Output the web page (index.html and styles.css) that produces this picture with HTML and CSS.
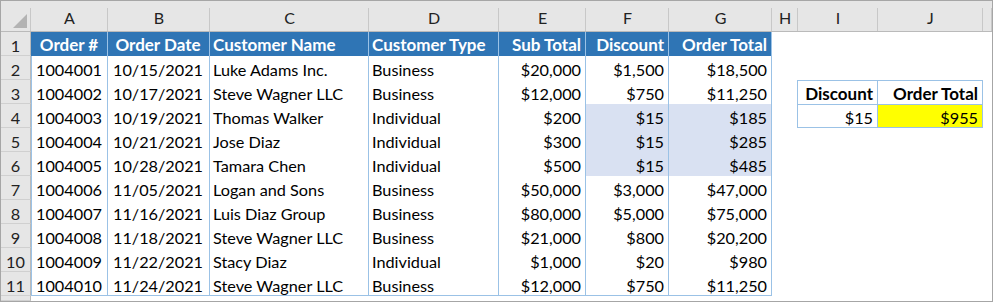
FILE: index.html
```
<!DOCTYPE html>
<html>
<head>
<meta charset="utf-8">
<link rel="stylesheet" href="styles.css">
</head>
<body>
<div class="sheet">
  <div class="ch corner"><svg width="29" height="30" viewBox="0 0 29 30"><polygon points="25,13 25,27 11,27" fill="#b3b3b3"/></svg></div>
  <div class="ch">A</div><div class="ch">B</div><div class="ch">C</div><div class="ch">D</div><div class="ch">E</div><div class="ch">F</div><div class="ch">G</div><div class="ch">H</div><div class="ch">I</div><div class="ch">J</div><div class="ch"></div>

  <div class="rh">1</div>
  <div class="c th cen first">Order #</div><div class="c th cen">Order Date</div><div class="c th">Customer Name</div><div class="c th">Customer Type</div><div class="c th r">Sub Total</div><div class="c th r">Discount</div><div class="c th r">Order Total</div>
  <div class="c"></div><div class="c"></div><div class="c"></div><div class="c"></div>

  <div class="rh">2</div>
  <div class="c t cen first">1004001</div><div class="c t cen">10/15/2021</div><div class="c t">Luke Adams Inc.</div><div class="c t">Business</div><div class="c t r">$20,000</div><div class="c t r">$1,500</div><div class="c t r">$18,500</div>
  <div class="c"></div><div class="c"></div><div class="c"></div><div class="c"></div>

  <div class="rh">3</div>
  <div class="c t cen first">1004002</div><div class="c t cen">10/17/2021</div><div class="c t">Steve Wagner LLC</div><div class="c t">Business</div><div class="c t r">$12,000</div><div class="c t r">$750</div><div class="c t r">$11,250</div>
  <div class="c sl"></div><div class="c st sh r">Discount</div><div class="c st sh r">Order Total</div><div class="c"></div>

  <div class="rh">4</div>
  <div class="c t cen first">1004003</div><div class="c t cen">10/19/2021</div><div class="c t">Thomas Walker</div><div class="c t">Individual</div><div class="c t r">$200</div><div class="c t r hl">$15</div><div class="c t r hl">$185</div>
  <div class="c sl"></div><div class="c st sb r">$15</div><div class="c st sb r yel">$955</div><div class="c"></div>

  <div class="rh">5</div>
  <div class="c t cen first">1004004</div><div class="c t cen">10/21/2021</div><div class="c t">Jose Diaz</div><div class="c t">Individual</div><div class="c t r">$300</div><div class="c t r hl">$15</div><div class="c t r hl">$285</div>
  <div class="c"></div><div class="c"></div><div class="c"></div><div class="c"></div>

  <div class="rh">6</div>
  <div class="c t cen first">1004005</div><div class="c t cen">10/28/2021</div><div class="c t">Tamara Chen</div><div class="c t">Individual</div><div class="c t r">$500</div><div class="c t r hl">$15</div><div class="c t r hl">$485</div>
  <div class="c"></div><div class="c"></div><div class="c"></div><div class="c"></div>

  <div class="rh">7</div>
  <div class="c t cen first">1004006</div><div class="c t cen">11/05/2021</div><div class="c t">Logan and Sons</div><div class="c t">Business</div><div class="c t r">$50,000</div><div class="c t r">$3,000</div><div class="c t r">$47,000</div>
  <div class="c"></div><div class="c"></div><div class="c"></div><div class="c"></div>

  <div class="rh">8</div>
  <div class="c t cen first">1004007</div><div class="c t cen">11/16/2021</div><div class="c t">Luis Diaz Group</div><div class="c t">Business</div><div class="c t r">$80,000</div><div class="c t r">$5,000</div><div class="c t r">$75,000</div>
  <div class="c"></div><div class="c"></div><div class="c"></div><div class="c"></div>

  <div class="rh">9</div>
  <div class="c t cen first">1004008</div><div class="c t cen">11/18/2021</div><div class="c t">Steve Wagner LLC</div><div class="c t">Business</div><div class="c t r">$21,000</div><div class="c t r">$800</div><div class="c t r">$20,200</div>
  <div class="c"></div><div class="c"></div><div class="c"></div><div class="c"></div>

  <div class="rh">10</div>
  <div class="c t cen first">1004009</div><div class="c t cen">11/22/2021</div><div class="c t">Stacy Diaz</div><div class="c t">Individual</div><div class="c t r">$1,000</div><div class="c t r">$20</div><div class="c t r">$980</div>
  <div class="c"></div><div class="c"></div><div class="c"></div><div class="c"></div>

  <div class="rh">11</div>
  <div class="c t cen first last">1004010</div><div class="c t cen last">11/24/2021</div><div class="c t last">Steve Wagner LLC</div><div class="c t last">Business</div><div class="c t r last">$12,000</div><div class="c t r last">$750</div><div class="c t r last">$11,250</div>
  <div class="c"></div><div class="c"></div><div class="c"></div><div class="c"></div>

  <div class="rh end"></div>
</div>
</body>
</html>
```
FILE: styles.css
```
* {
  box-sizing: border-box;
  margin: 0;
  padding: 0;
}

body {
  margin: 0;
  background: #ffffff;
  font-family: Lato, "Liberation Sans", sans-serif;
}

.sheet {
  width: 993px;
  height: 302px;
  border: 1px solid #a6a6a6;
  display: grid;
  grid-template-columns: 30px 77px 102px 159px 130px 87px 83px 103px 26px 80px 105px 1fr;
  grid-template-rows: 31px repeat(11, 24px) 1fr;
  overflow: hidden;
  font-size: 16.25px;
  color: #000000;
  background: #ffffff;
}

.ch {
  background: linear-gradient(#c8c8c8, #c8c8c8) right bottom / 1px 23px no-repeat, #e6e6e6;
  border-bottom: 1px solid #bababa;
  text-align: center;
  font-size: 16px;
  line-height: 18px;
  padding-top: 8px;
  color: #222222;
}

.corner {
  padding: 0;
  line-height: 0;
}

.rh {
  background: #e6e6e6;
  border-right: 1px solid #bababa;
  border-bottom: 1px solid #d0d0d0;
  text-align: center;
  line-height: 20px;
  padding-top: 4px;
  color: #222222;
}

.rh.end {
  grid-column: 1;
}

.c {
  line-height: 20px;
  padding: 4px 4px 0 3px;
  white-space: nowrap;
  overflow: hidden;
}

.t {
  border-right: 1px solid #9bc2e6;
}

.first {
  border-left: 1px solid #9bc2e6;
}

.last {
  border-bottom: 1px solid #9bc2e6;
}

.th {
  background: #2f75b5;
  color: #ffffff;
  font-weight: 700;
  font-size: 17px;
  padding-top: 3px;
  border-right: 1px solid #9bc2e6;
}

.th.first {
  border-left: 1px solid #2f75b5;
}

.cen {
  text-align: center;
}

.r {
  text-align: right;
}

.hl {
  background: #d9e1f2;
}

.yel {
  background: #ffff00;
}

.sl {
  border-right: 1px solid #9bc2e6;
}

.st {
  border-right: 1px solid #9bc2e6;
  border-top: 1px solid #9bc2e6;
  padding-top: 3px;
}

.sb {
  border-bottom: 1px solid #9bc2e6;
}

.sh {
  font-weight: 700;
  font-size: 17px;
}
```
